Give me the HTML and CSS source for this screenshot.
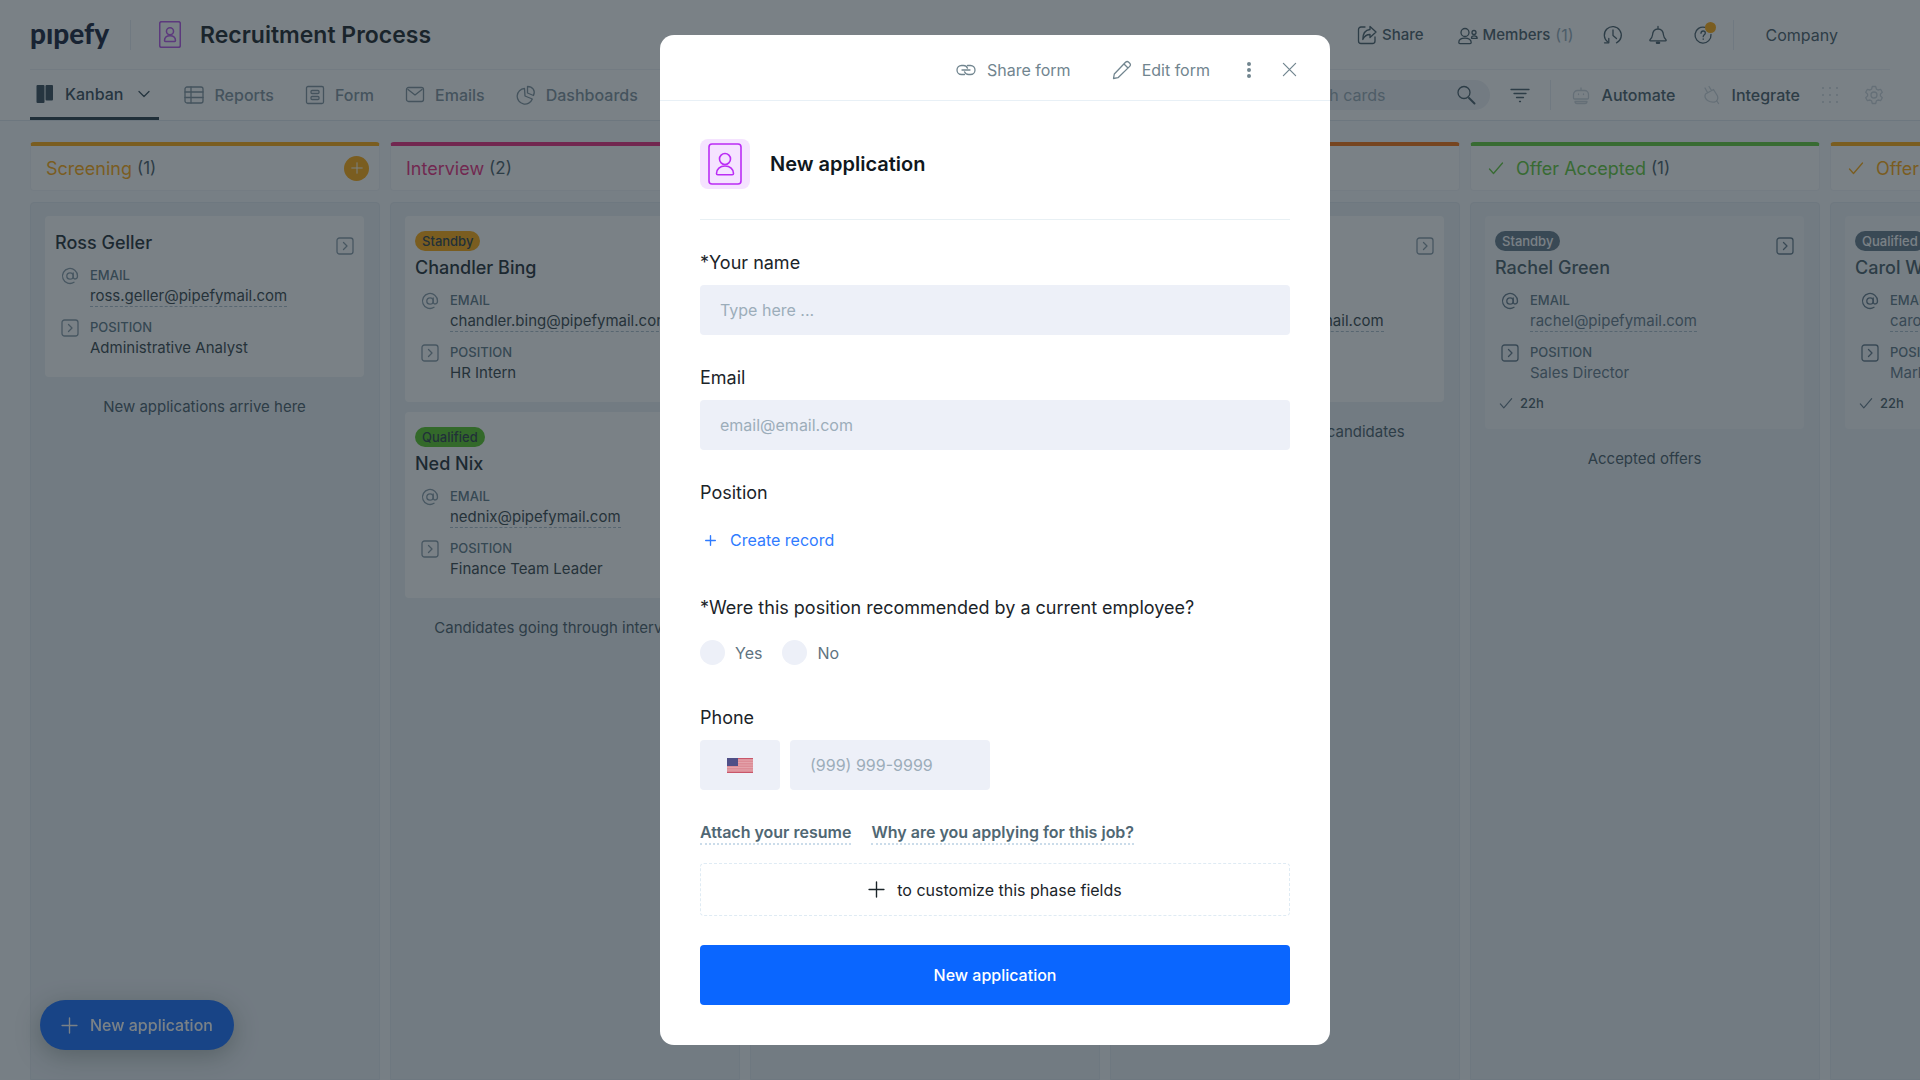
FILE: index.html
```html
<!DOCTYPE html>
<html lang="en">
  <head>
    <meta charset="UTF-8" />
    <meta name="viewport" content="width=device-width, initial-scale=1.0" />
    <title>Recruitment Process - Pipefy</title>
    <link rel="stylesheet" href="styles.css" />
  </head>
  <body>
    <!-- Icon sprite -->
    <svg class="sprite" aria-hidden="true">
      <symbol id="i-badge" viewBox="0 0 34 42">
        <rect x="1" y="1" width="32" height="40" rx="3" />
        <circle cx="17" cy="16" r="5.5" />
        <path d="M8.5 30.500c0-4.500 3.500-7.500 8.500-7.500s8.500 3 8.500 7.500c0 .8-.5 1.300-1.300 1.300H9.800c-.8 0-1.300-.5-1.300-1.300z" />
      </symbol>
      <symbol id="i-share" viewBox="0 0 20 20">
        <path d="M8 2H4a2.500 2.500 0 0 0-2.500 2.500v11.500A2.500 2.500 0 0 0 4 18.500h11.500a2.500 2.500 0 0 0 2.500-2.500V12" />
        <path d="M13 1.500l6 5.500-6 5.500V9.500c-3.500 0-5.500 1.200-7.200 5C5.800 8.500 8 5 13 4.500z" />
      </symbol>
      <symbol id="i-members" viewBox="0 0 20 20">
        <circle cx="7" cy="7.500" r="4" />
        <path d="M.8 17.500c0-2.800 2.600-4.300 6.200-4.300s6.200 1.500 6.200 4.300c0 .7-.4 1.100-1.100 1.100H1.900c-.7 0-1.100-.4-1.100-1.100z" />
        <circle cx="16" cy="7.500" r="2" />
        <path d="M13.500 13.300v-.5c0-1.300 1-2 2.700-2s3 .7 3 2.500h-5z" />
      </symbol>
      <symbol id="i-history" viewBox="0 0 20 20">
        <path d="M4.800 17A8.500 8.500 0 1 1 13.500 17.800" />
        <path d="M1.500 17.800h4.300v-4.300" />
        <path d="M10 5v5.500l3.500 3" />
      </symbol>
      <symbol id="i-bell" viewBox="0 0 20 20">
        <path d="M10 1.500v2M2.500 15.800h15c.8 0 .9-.8.300-1.300-1.500-1.200-2-2.500-2.300-4.500C15.200 6.500 13.500 4 10 4S4.800 6.500 4.500 10c-.3 2-.8 3.300-2.300 4.500-.6.500-.5 1.300.3 1.300z" />
        <path d="M9 17.700h2" stroke-width="2.500" />
      </symbol>
      <symbol id="i-help" viewBox="0 0 20 20">
        <path d="M12 2.300a8 8 0 1 0 6 7.200" />
        <path d="M8 8.300c0-1.500 1-2.300 2.200-2.300s2.100.9 2.100 2c0 1.800-2.100 1.900-2.100 3.700M10.200 13.800v.5" />
      </symbol>
      <symbol id="i-kanban" viewBox="0 0 20 20">
        <rect x="1.500" y="1" width="8" height="18" rx="1" />
        <rect x="10.500" y="1" width="7.500" height="15.500" rx="1" />
      </symbol>
      <symbol id="i-chevron" viewBox="0 0 12 12">
        <path d="M1 3.500l5 5 5-5" />
      </symbol>
      <symbol id="i-table" viewBox="0 0 20 20">
        <rect x="1" y="2" width="18" height="16" rx="2" />
        <path d="M1 7h18M1 12.500h18M7 2v16" />
      </symbol>
      <symbol id="i-form" viewBox="0 0 20 20">
        <rect x="1.500" y="1.500" width="17" height="17" rx="1.500" />
        <rect x="6" y="5.500" width="8" height="3" rx="1" />
        <rect x="6" y="11.500" width="8" height="3" rx="1" />
      </symbol>
      <symbol id="i-mail" viewBox="0 0 20 20">
        <rect x="1.500" y="2.500" width="17" height="14" rx="2" />
        <path d="M3 4.500l7 5.500 7-5.500" />
      </symbol>
      <symbol id="i-pie" viewBox="0 0 20 20">
        <path d="M8.500 3.500A7.800 7.800 0 1 0 16.300 14L9 11z" />
        <path d="M11.500 1.500v6.500l6 2.500c2.300-5-1-9-6-9z" />
      </symbol>
      <symbol id="i-search" viewBox="0 0 20 20">
        <circle cx="8" cy="7.500" r="6" />
        <path d="M13 13l5.500 5.500" stroke-width="2" />
      </symbol>
      <symbol id="i-filter" viewBox="0 0 20 20">
        <path d="M1 4.500h18M4 8.500h12M6.500 12.500h7M9.500 16.500h1" />
      </symbol>
      <symbol id="i-robot" viewBox="0 0 20 20">
        <path d="M2.500 13V9.500a4 4 0 0 1 4-4h7a4 4 0 0 1 4 4V13c0 .6-.4 1-1 1h-13c-.6 0-1-.4-1-1zM10 5.500V3M4 16.500c0 1.200.8 2 2 2h8c1.200 0 2-.8 2-2z" />
        <path d="M7.500 9v.5M12.500 9v.5" />
      </symbol>
      <symbol id="i-plug" viewBox="0 0 20 20">
        <path d="M4.500 9l8-4.500 4 6.500c1 3-.5 5.500-3 6-3 .5-5-.3-7-1.500C4 13.500 3.500 11 4.500 9zM6.500 7.500L4 3M10.500 5.500L8 1.500M15.500 15.500l2 3" />
      </symbol>
      <symbol id="i-gear" viewBox="0 0 20 20">
        <circle cx="10" cy="10" r="3" />
        <path d="M8.300 1.500h3.400l.7 2.600 1.600.9 2.600-.7 1.700 3-1.900 1.800v1.800l1.900 1.800-1.700 3-2.600-.7-1.600.9-.7 2.600H8.300l-.7-2.600-1.600-.9-2.600.7-1.700-3 1.900-1.800V9.100L1.700 7.300l1.700-3 2.600.7 1.600-.9z" />
      </symbol>
      <symbol id="i-grid" viewBox="0 0 20 20">
        <path d="M3 3h0M10 3h0M17 3h0M3 10h0M10 10h0M17 10h0M3 17h0M10 17h0M17 17h0" />
      </symbol>
      <symbol id="i-check" viewBox="0 0 16 16">
        <path d="M1.500 9l4 4.500L14.500 3" />
      </symbol>
      <symbol id="i-plus" viewBox="0 0 16 16">
        <path d="M8 1v14M1 8h14" />
      </symbol>
      <symbol id="i-open" viewBox="0 0 18 18">
        <rect x="1" y="1" width="16" height="16" rx="2.500" />
        <path d="M7.500 5.500L11 9l-3.500 3.500" />
      </symbol>
      <symbol id="i-at" viewBox="0 0 18 18">
        <circle cx="9" cy="9" r="3.200" />
        <path d="M12.200 5.800V10c0 2.800 4.300 2.800 4.300-1A7.500 7.500 0 1 0 13 15.300" />
      </symbol>
      <symbol id="i-link" viewBox="0 0 22 22">
        <path d="M9.500 15.500H6.500a4.500 4.500 0 0 1 0-9h2c1.800 0 3.300 1 4 2.700M12.500 6.500h3a4.500 4.500 0 0 1 0 9h-2c-1.800 0-3.300-1-4-2.700M7 11h8" />
      </symbol>
      <symbol id="i-pencil" viewBox="0 0 20 20">
        <path d="M1.500 18.500l.8-4.500L13.500 2.300c1-1 2.200-1 3.200-.1l1 1c1 1 1 2.200 0 3.200L6 17.700zM12 4l4 4" />
      </symbol>
      <symbol id="i-close" viewBox="0 0 16 16">
        <path d="M1.500 1.500l13 13M14.500 1.500l-13 13" />
      </symbol>
      <symbol id="i-dots" viewBox="0 0 6 18">
        <path d="M3 3h0M3 9h0M3 15h0" />
      </symbol>
    </svg>

    <div class="page-head">
      <!-- Top bar -->
      <header class="topbar">
        <a href="#" class="logo" aria-label="pipefy">pıpefy</a>
        <span class="divider"></span>
        <svg class="icon pipe-icon"><use href="#i-badge" /></svg>
        <h1 class="pipe-title">Recruitment Process</h1>

        <div class="topbar-actions">
          <button class="top-btn"><svg class="icon"><use href="#i-share" /></svg>Share</button>
          <button class="top-btn members"><svg class="icon"><use href="#i-members" /></svg>Members <span class="count">(1)</span></button>
          <div class="top-icons">
            <button class="icon-btn" aria-label="History"><svg class="icon"><use href="#i-history" /></svg></button>
            <button class="icon-btn" aria-label="Notifications"><svg class="icon"><use href="#i-bell" /></svg></button>
            <button class="icon-btn help" aria-label="Help"><svg class="icon"><use href="#i-help" /></svg></button>
          </div>
          <span class="divider"></span>
          <button class="company">Company</button>
        </div>
      </header>

      <!-- Tabs -->
      <nav class="tabs">
        <div class="tab-list">
          <a href="#" class="tab active"><svg class="icon solid"><use href="#i-kanban" /></svg>Kanban<svg class="icon chevron"><use href="#i-chevron" /></svg></a>
          <a href="#" class="tab"><svg class="icon"><use href="#i-table" /></svg>Reports</a>
          <a href="#" class="tab"><svg class="icon"><use href="#i-form" /></svg>Form</a>
          <a href="#" class="tab"><svg class="icon"><use href="#i-mail" /></svg>Emails</a>
          <a href="#" class="tab"><svg class="icon"><use href="#i-pie" /></svg>Dashboards</a>
        </div>

        <div class="tools">
          <label class="search">
            <input type="text" placeholder="Search cards" aria-label="Search cards" />
            <svg class="icon"><use href="#i-search" /></svg>
          </label>
          <button class="icon-btn" aria-label="Filter"><svg class="icon"><use href="#i-filter" /></svg></button>
          <span class="divider"></span>
          <button class="tool-btn"><svg class="icon"><use href="#i-robot" /></svg>Automate</button>
          <button class="tool-btn integrate"><svg class="icon"><use href="#i-plug" /></svg>Integrate</button>
          <button class="icon-btn faded apps" aria-label="Apps"><svg class="icon"><use href="#i-grid" /></svg></button>
          <button class="icon-btn faded" aria-label="Settings"><svg class="icon"><use href="#i-gear" /></svg></button>
        </div>
      </nav>
    </div>

    <!-- Board -->
    <main class="board">
      <section class="phase yellow">
        <header class="phase-header">
          <h2>Screening</h2><span class="phase-count">(1)</span>
          <button class="add-card" aria-label="Add card"><svg class="icon"><use href="#i-plus" /></svg></button>
        </header>
        <div class="phase-body">
          <article class="card">
            <svg class="icon card-open"><use href="#i-open" /></svg>
            <h3>Ross Geller</h3>
            <div class="field">
              <svg class="icon"><use href="#i-at" /></svg>
              <div><span class="field-label">EMAIL</span><a href="#" class="field-value">ross.geller@pipefymail.com</a></div>
            </div>
            <div class="field">
              <svg class="icon"><use href="#i-open" /></svg>
              <div><span class="field-label">POSITION</span><span class="field-value">Administrative Analyst</span></div>
            </div>
          </article>
          <p class="phase-note">New applications arrive here</p>
        </div>
      </section>

      <section class="phase pink">
        <header class="phase-header">
          <h2>Interview</h2><span class="phase-count">(2)</span>
        </header>
        <div class="phase-body">
          <article class="card">
            <svg class="icon card-open"><use href="#i-open" /></svg>
            <span class="tag standby">Standby</span>
            <h3>Chandler Bing</h3>
            <div class="field">
              <svg class="icon"><use href="#i-at" /></svg>
              <div><span class="field-label">EMAIL</span><a href="#" class="field-value">chandler.bing@pipefymail.com</a></div>
            </div>
            <div class="field">
              <svg class="icon"><use href="#i-open" /></svg>
              <div><span class="field-label">POSITION</span><span class="field-value">HR Intern</span></div>
            </div>
          </article>
          <article class="card">
            <svg class="icon card-open"><use href="#i-open" /></svg>
            <span class="tag qualified">Qualified</span>
            <h3>Ned Nix</h3>
            <div class="field">
              <svg class="icon"><use href="#i-at" /></svg>
              <div><span class="field-label">EMAIL</span><a href="#" class="field-value">nednix@pipefymail.com</a></div>
            </div>
            <div class="field">
              <svg class="icon"><use href="#i-open" /></svg>
              <div><span class="field-label">POSITION</span><span class="field-value">Finance Team Leader</span></div>
            </div>
          </article>
          <p class="phase-note">Candidates going through interviews</p>
        </div>
      </section>

      <section class="phase pink">
        <header class="phase-header"></header>
        <div class="phase-body"></div>
      </section>

      <section class="phase orange">
        <header class="phase-header"></header>
        <div class="phase-body">
          <article class="card">
            <svg class="icon card-open"><use href="#i-open" /></svg>
            <span class="tag standby">Standby</span>
            <h3>Joey Tribbiani</h3>
            <div class="field">
              <svg class="icon"><use href="#i-at" /></svg>
              <div><span class="field-label">EMAIL</span><a href="#" class="field-value">joey.tribbiani@pipefymail.com</a></div>
            </div>
            <div class="field">
              <svg class="icon"><use href="#i-open" /></svg>
              <div><span class="field-label">POSITION</span><span class="field-value">Analyst</span></div>
            </div>
          </article>
          <p class="phase-note">Offers sent to the best candidates</p>
        </div>
      </section>

      <section class="phase green">
        <header class="phase-header">
          <svg class="icon check"><use href="#i-check" /></svg><h2>Offer Accepted</h2><span class="phase-count">(1)</span>
        </header>
        <div class="phase-body">
          <article class="card done">
            <svg class="icon card-open"><use href="#i-open" /></svg>
            <span class="tag">Standby</span>
            <h3>Rachel Green</h3>
            <div class="field">
              <svg class="icon"><use href="#i-at" /></svg>
              <div><span class="field-label">EMAIL</span><a href="#" class="field-value">rachel@pipefymail.com</a></div>
            </div>
            <div class="field">
              <svg class="icon"><use href="#i-open" /></svg>
              <div><span class="field-label">POSITION</span><span class="field-value">Sales Director</span></div>
            </div>
            <div class="card-time"><svg class="icon"><use href="#i-check" /></svg>22h</div>
          </article>
          <p class="phase-note">Accepted offers</p>
        </div>
      </section>

      <section class="phase yellow">
        <header class="phase-header">
          <svg class="icon check"><use href="#i-check" /></svg><h2>Offer Declined</h2>
        </header>
        <div class="phase-body">
          <article class="card done">
            <span class="tag">Qualified</span>
            <h3>Carol Willick</h3>
            <div class="field">
              <svg class="icon"><use href="#i-at" /></svg>
              <div><span class="field-label">EMAIL</span><a href="#" class="field-value">carol@pipefymail.com</a></div>
            </div>
            <div class="field">
              <svg class="icon"><use href="#i-open" /></svg>
              <div><span class="field-label">POSITION</span><span class="field-value">Marketing Analyst</span></div>
            </div>
            <div class="card-time"><svg class="icon"><use href="#i-check" /></svg>22h</div>
          </article>
        </div>
      </section>
    </main>

    <button class="fab"><svg class="icon"><use href="#i-plus" /></svg>New application</button>

    <!-- New application modal -->
    <div class="overlay">
      <div class="modal" role="dialog" aria-labelledby="modal-title">
        <div class="modal-bar">
          <button class="bar-btn"><svg class="icon link"><use href="#i-link" /></svg>Share form</button>
          <button class="bar-btn"><svg class="icon"><use href="#i-pencil" /></svg>Edit form</button>
          <button class="bar-icon" aria-label="More"><svg class="icon dots"><use href="#i-dots" /></svg></button>
          <button class="bar-icon" aria-label="Close"><svg class="icon"><use href="#i-close" /></svg></button>
        </div>

        <form class="modal-body">
          <div class="modal-head">
            <span class="modal-badge"><svg class="icon"><use href="#i-badge" /></svg></span>
            <h2 id="modal-title">New application</h2>
          </div>

          <div class="form-group">
            <label class="form-label" for="name">*Your name</label>
            <input class="text-input" id="name" type="text" placeholder="Type here ..." />
          </div>

          <div class="form-group">
            <label class="form-label" for="email">Email</label>
            <input class="text-input" id="email" type="email" placeholder="email@email.com" />
          </div>

          <div class="form-group">
            <span class="form-label">Position</span>
            <button type="button" class="create-record"><svg class="icon"><use href="#i-plus" /></svg>Create record</button>
          </div>

          <fieldset class="form-group">
            <legend class="form-label">*Were this position recommended by a current employee?</legend>
            <div class="radios">
              <label><input type="radio" name="recommended" />Yes</label>
              <label><input type="radio" name="recommended" />No</label>
            </div>
          </fieldset>

          <div class="form-group">
            <label class="form-label" for="phone">Phone</label>
            <div class="phone-row">
              <button type="button" class="country" aria-label="United States">
                <svg class="flag" viewBox="0 0 26 15">
                  <rect width="26" height="15" fill="#dc8c96" />
                  <path d="M11 2h15M11 4.500h15M11 7h15M0 9.500h26M0 12h26" stroke="#e3a3ab" stroke-width="1" />
                  <path d="M0 14.500h26M11 .5h15" stroke="#c9566a" stroke-width="1" />
                  <rect width="11" height="8" fill="#4f4f87" />
                </svg>
              </button>
              <input class="text-input phone" id="phone" type="tel" placeholder="(999) 999-9999" />
            </div>
          </div>

          <div class="extra-fields">
            <a href="#">Attach your resume</a>
            <a href="#">Why are you applying for this job?</a>
          </div>

          <button type="button" class="customize"><svg class="icon"><use href="#i-plus" /></svg>to customize this phase fields</button>
          <button type="submit" class="submit">New application</button>
        </form>
      </div>
    </div>
  </body>
</html>
```
FILE: styles.css
```css
* {
  margin: 0;
  padding: 0;
  box-sizing: border-box;
}

body {
  height: 100vh;
  display: flex;
  flex-direction: column;
  overflow: hidden;
  background-color: #f7f9fc;
  color: #3f5561;
  font-family: Inter, "Liberation Sans", sans-serif;
  font-size: 16px;
}

button,
input {
  border: none;
  background: none;
  color: inherit;
  font: inherit;
}

button {
  cursor: pointer;
}

a {
  color: inherit;
  text-decoration: none;
}

.sprite {
  position: absolute;
  width: 0;
  height: 0;
}

.icon {
  width: 20px;
  height: 20px;
  flex-shrink: 0;
  fill: none;
  stroke: currentColor;
  stroke-width: 1.3;
  stroke-linecap: round;
  stroke-linejoin: round;
}

.icon.solid {
  fill: currentColor;
  stroke: none;
}

.divider {
  width: 1px;
  height: 30px;
  background-color: #e6ecf2;
}

.page-head {
  padding: 0 30px;
  background-color: #fff;
  border-bottom: 1px solid #dfe6ed;
}

/* Top bar */
.topbar {
  display: flex;
  align-items: center;
  height: 70px;
  border-bottom: 1px solid #edf1f5;
}

.logo {
  width: 100px;
  padding-bottom: 4px;
  color: #0b1530;
  font-family: Lato, sans-serif;
  font-size: 28px;
  font-weight: 900;
  line-height: 28px;
}

.pipe-icon {
  width: 22px;
  height: 27px;
  margin: 0 19px 0 28px;
  color: #b44be8;
  stroke-width: 2.4;
}

.pipe-title {
  color: #10181d;
  font-size: 23px;
  font-weight: 600;
}

.topbar-actions {
  display: flex;
  align-items: center;
  margin-left: auto;
}

.top-btn {
  display: flex;
  align-items: center;
  gap: 5px;
  margin-right: 34px;
  font-size: 15px;
  font-weight: 500;
}

.top-btn.members {
  margin-right: 29px;
}

.top-btn .count {
  color: #8ea5b5;
  font-size: 16px;
  font-weight: 400;
}

.top-icons {
  display: flex;
  gap: 25px;
  margin-right: 20px;
}

.icon-btn {
  position: relative;
  display: flex;
}

.help::after {
  content: "";
  position: absolute;
  top: -3px;
  right: -3px;
  width: 11px;
  height: 11px;
  border-radius: 50%;
  background-color: #ffa500;
}

.company {
  padding: 0 52px 0 32px;
}

/* Tabs */
.tabs {
  display: flex;
  justify-content: space-between;
  align-items: center;
  height: 50px;
}

.tab-list {
  display: flex;
  height: 50px;
  gap: 31px;
}

.tab {
  display: flex;
  align-items: center;
  gap: 10px;
  color: #7a8d99;
  font-weight: 500;
}

.tab.active {
  margin-right: -6px;
  padding: 0 9px 0 5px;
  border-bottom: 3px solid #1f343f;
  color: #2d4350;
}

.tab .chevron {
  width: 12px;
  height: 12px;
  margin-left: 5px;
}

.tools {
  display: flex;
  align-items: center;
  gap: 20px;
  margin-right: 6px;
}

.search {
  display: flex;
  align-items: center;
  width: 220px;
  height: 30px;
  padding: 0 14px 0 16px;
  border-radius: 15px;
  background-color: #edf0f5;
}

.search input {
  flex: 1;
  min-width: 0;
  outline: none;
}

.search input::placeholder {
  color: #93a5b1;
  opacity: 1;
}

.tool-btn {
  display: flex;
  align-items: center;
  gap: 11px;
  font-weight: 500;
}

.integrate {
  margin-left: 5px;
}

.tool-btn .icon,
.faded {
  color: #cbd3da;
}

.apps {
  margin-right: 4px;
}

.apps .icon {
  stroke-width: 2;
}

/* Board */
.board {
  flex: 1;
  display: flex;
  gap: 10px;
  min-height: 0;
  overflow: hidden;
  padding: 21px 0 0 30px;
}

.phase {
  flex: 0 0 350px;
  display: flex;
  flex-direction: column;
  gap: 11px;
}

.phase.yellow {
  --phase: #ffa500;
}

.phase.pink {
  --phase: #ea1e79;
}

.phase.orange {
  --phase: #f56a00;
}

.phase.green {
  --phase: #5ac72f;
}

.phase-header {
  display: flex;
  align-items: center;
  gap: 5px;
  height: 49px;
  padding: 0 10px 0 15px;
  border: 1px solid #f0f3f7;
  border-top: 4px solid var(--phase);
  border-radius: 4px;
  background-color: #fff;
}

.phase-header h2 {
  color: var(--phase);
  font-size: 18px;
  font-weight: 400;
}

.phase-count {
  font-size: 17px;
}

.phase-header .check {
  width: 16px;
  height: 16px;
  margin: 0 7px 0 2px;
  color: var(--phase);
}

.add-card {
  display: flex;
  justify-content: center;
  align-items: center;
  width: 25px;
  height: 25px;
  margin-left: auto;
  border-radius: 50%;
  background-color: var(--phase);
  color: #fff;
}

.add-card .icon {
  width: 12px;
  height: 12px;
}

.phase-body {
  flex: 1;
  display: flex;
  flex-direction: column;
  gap: 10px;
  padding: 13px 15px 13px 14px;
  border: 1px solid #e2e8ef;
  border-radius: 4px 4px 0 0;
  background-color: #ebeff5;
}

.card {
  position: relative;
  padding: 15px 10px 18px;
  border-radius: 4px;
  background-color: #fff;
}

.card h3 {
  color: #16242c;
  font-size: 18px;
  font-weight: 500;
  line-height: 24px;
}

.card .icon {
  width: 18px;
  height: 18px;
}

.card-open {
  position: absolute;
  top: 21px;
  right: 10px;
  color: #8296a4;
}

.tag {
  display: table;
  margin-bottom: 5px;
  padding: 0 7px;
  border-radius: 10px;
  background-color: #5c7385;
  color: #fff;
  font-size: 13px;
  font-weight: 500;
  line-height: 20px;
}

.tag.standby {
  background-color: #ffa500;
  color: #22353f;
}

.tag.qualified {
  background-color: #4fc41a;
  color: #22353f;
}

.field {
  display: flex;
  gap: 11px;
  padding-left: 6px;
  margin-top: 10px;
}

.field .icon {
  margin-top: 2px;
  color: #8296a4;
}

.field-label {
  display: block;
  color: #557080;
  font-size: 13px;
  font-weight: 500;
  line-height: 20px;
}

.field-value {
  display: table;
  color: #2c3a42;
  font-size: 15px;
  line-height: 22px;
}

a.field-value {
  line-height: 21px;
  border-bottom: 1px dashed #a9bccb;
}

.card-time {
  display: flex;
  align-items: center;
  gap: 7px;
  margin-top: 9px;
  padding-left: 4px;
  font-size: 13px;
  font-weight: 500;
  line-height: 20px;
}

.card-time .icon {
  width: 14px;
  height: 14px;
}

.card.done {
  padding-bottom: 16px;
  background-color: #f5f8fa;
}

.card.done h3 {
  color: #3f5561;
}

.card.done .icon {
  color: #5c7385;
}

.card.done .field-value {
  color: #5c7385;
}

.phase-note {
  margin-top: 10px;
  font-size: 15px;
  line-height: 20px;
  text-align: center;
}

.fab {
  position: fixed;
  left: 40px;
  bottom: 30px;
  display: flex;
  align-items: center;
  gap: 12px;
  height: 50px;
  padding: 0 21px;
  border-radius: 25px;
  background-color: #0a66ff;
  color: #fff;
  font-weight: 500;
  box-shadow: 0 6px 24px rgba(40, 60, 50, 0.35);
}

.fab .icon {
  width: 17px;
  height: 17px;
}

/* Modal */
.overlay {
  position: fixed;
  inset: 0;
  display: flex;
  justify-content: center;
  align-items: center;
  padding-left: 70px;
  background-color: rgba(33, 45, 53, 0.6);
}

.modal {
  width: 670px;
  border-radius: 14px;
  background-color: #fff;
}

.modal-bar {
  display: flex;
  justify-content: flex-end;
  align-items: center;
  height: 66px;
  padding: 4px 33px 0 0;
  border-bottom: 1px solid #e8f0f6;
  color: #71858f;
}

.bar-btn {
  display: flex;
  align-items: center;
  gap: 10px;
  margin-right: 41px;
}

.bar-btn .link {
  width: 22px;
  height: 22px;
}

.bar-icon {
  display: flex;
  margin-left: 30px;
}

.bar-btn + .bar-icon {
  margin-left: -5px;
}

.bar-icon .icon {
  width: 15px;
  height: 15px;
}

.bar-icon .dots {
  width: 6px;
  height: 18px;
  stroke-width: 4;
}

.modal-body {
  padding: 38px 40px 40px;
}

.modal-head {
  display: flex;
  align-items: center;
  gap: 20px;
  margin-bottom: 30px;
  padding-bottom: 30px;
  border-bottom: 1px solid #e8f0f4;
}

.modal-badge {
  display: flex;
  justify-content: center;
  align-items: center;
  width: 50px;
  height: 50px;
  border-radius: 8px;
  background-color: #f5e3ff;
  color: #bb2df5;
}

.modal-badge .icon {
  width: 34px;
  height: 42px;
  stroke-width: 1.6;
}

.modal-head h2 {
  color: #10181d;
  font-size: 20px;
  font-weight: 600;
}

.form-group {
  margin-bottom: 30px;
  border: none;
}

.form-label {
  display: block;
  margin-bottom: 10px;
  color: #1b2429;
  font-size: 18px;
  line-height: 25px;
}

.text-input {
  display: block;
  width: 100%;
  height: 50px;
  padding: 0 20px;
  border-radius: 4px;
  background-color: #edf0f8;
  outline: none;
}

.text-input::placeholder {
  color: #9cadba;
  opacity: 1;
}

.create-record {
  display: flex;
  align-items: center;
  gap: 14px;
  height: 50px;
  padding-left: 5px;
  color: #2f7bff;
}

.create-record .icon {
  width: 11px;
  height: 11px;
  stroke-width: 2;
}

.radios {
  display: flex;
  align-items: center;
  gap: 20px;
  height: 45px;
  color: #5f737f;
}

.radios label {
  display: flex;
  align-items: center;
  gap: 10px;
}

.radios input {
  appearance: none;
  width: 25px;
  height: 25px;
  border-radius: 50%;
  background-color: #edf0f8;
}

.radios input:checked {
  border: 7px solid #0a66ff;
}

.phone-row {
  display: flex;
  gap: 10px;
}

.country {
  display: flex;
  justify-content: center;
  align-items: center;
  width: 80px;
  border-radius: 4px;
  background-color: #edf0f8;
}

.flag {
  width: 26px;
  height: 15px;
}

.text-input.phone {
  width: 200px;
}

.extra-fields {
  display: flex;
  gap: 20px;
  margin: 32px 0 18px;
  color: #506773;
  font-weight: 600;
}

.extra-fields a {
  border-bottom: 2px dotted #cbdcea;
  line-height: 21px;
}

.customize {
  display: flex;
  justify-content: center;
  align-items: center;
  gap: 12px;
  width: 100%;
  height: 53px;
  margin-bottom: 29px;
  border: 1px dashed #dfebf4;
  border-radius: 4px;
  color: #1b2429;
}

.customize .icon {
  width: 17px;
  height: 17px;
}

.submit {
  display: block;
  width: 100%;
  height: 60px;
  border-radius: 4px;
  background-color: #0a66ff;
  color: #fff;
  font-weight: 500;
}

@media (max-width: 760px) {
  .overlay {
    padding: 0 10px;
  }

  .modal {
    width: 100%;
  }
}
```
